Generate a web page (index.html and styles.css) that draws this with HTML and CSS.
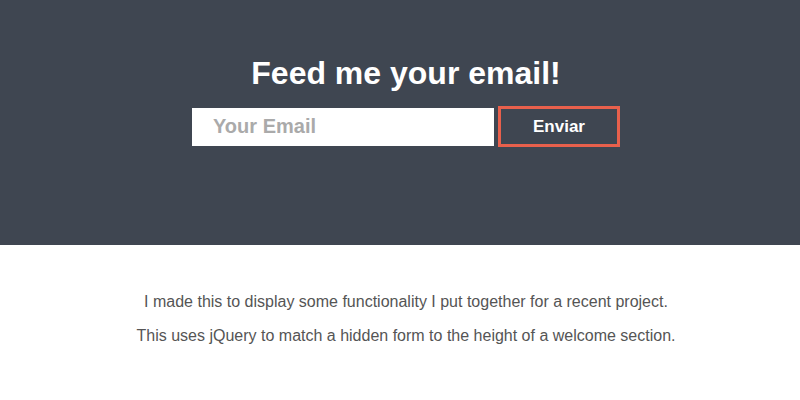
FILE: index.html
```html
<!DOCTYPE html>
<html lang="en">
<head>
  <meta charset="UTF-8">
  <title>Feed me your email</title>
  <link rel="stylesheet" href="styles.css">
</head>
<body>
  <section class="welcome">
    <h1>Feed me your email!</h1>
    <form class="signup">
      <input type="email" placeholder="Your Email">
      <button type="button">Enviar</button>
    </form>
  </section>

  <section class="about">
    <p>I made this to display some functionality I put together for a recent project.</p>
    <p>This uses jQuery to match a hidden form to the height of a welcome section.</p>
  </section>
</body>
</html>
```

FILE: styles.css
```css
* {
  margin: 0;
  box-sizing: border-box;
}
body {
  font-family: 'Liberation Sans', Arial, sans-serif;
  background: #fff;
  color: #555;
}
section {
  padding-left: 12px;
}
.welcome {
  background: #3f4651;
  height: 245px;
  padding-top: 54px;
  text-align: center;
}
.welcome h1 {
  color: #fff;
  font-size: 32px;
  font-weight: bold;
  line-height: 38px;
}
.signup {
  display: flex;
  justify-content: center;
  align-items: center;
  gap: 4px;
  margin-top: 14px;
}
.signup input {
  width: 302px;
  height: 38px;
  border: none;
  padding: 0 21px;
  font-family: inherit;
  font-size: 20px;
  font-weight: bold;
  color: #333;
  outline: none;
}
.signup input::placeholder {
  color: #aaa;
}
.signup button {
  width: 122px;
  height: 41px;
  background: transparent;
  border: 3px solid #e8604c;
  color: #fff;
  font-family: inherit;
  font-size: 17px;
  font-weight: bold;
}
.about {
  padding-top: 48px;
  text-align: center;
  font-size: 16px;
  color: #555;
}
.about p {
  line-height: 18px;
  margin-bottom: 16px;
}
```
